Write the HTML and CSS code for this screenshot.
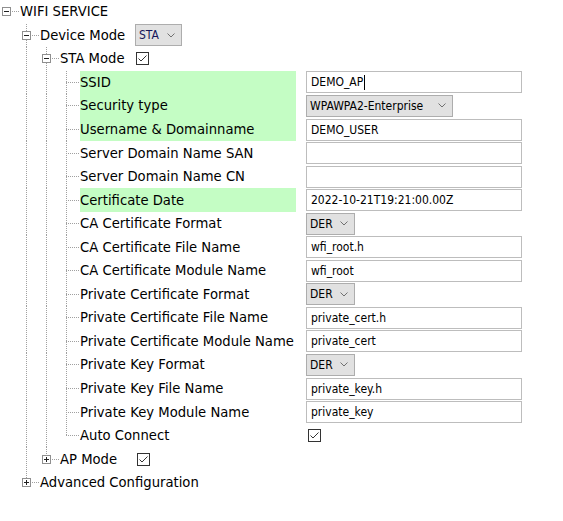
FILE: index.html
```html
<!DOCTYPE html>
<html>
<head>
<meta charset="utf-8">
<link rel="stylesheet" href="styles.css">
</head>
<body>
<div class="tree">
  <div class="row">
    <span class="node n-root"><svg class="exp" width="9" height="9" viewBox="0 0 9 9"><rect x="0.5" y="0.5" width="8" height="8" fill="#fff" stroke="#8f8f8f"/><path d="M2 4.5h5" stroke="#202020"/></svg></span>
    <span class="label">WIFI SERVICE</span>
  </div>
  <div class="row">
    <span class="spacer"></span>
    <span class="node n-mid"><svg class="exp" width="9" height="9" viewBox="0 0 9 9"><rect x="0.5" y="0.5" width="8" height="8" fill="#fff" stroke="#8f8f8f"/><path d="M2 4.5h5" stroke="#202020"/></svg></span>
    <span class="label w-l1">Device Mode</span>
    <span class="select sel-sta"><span class="sel-text navy">STA</span><svg class="chev" width="8" height="5" viewBox="0 0 8 5"><path d="M0.5 0.5L4 4L7.5 0.5" fill="none" stroke="#707070"/></svg></span>
  </div>
  <div class="row">
    <span class="spacer"></span><span class="guide"></span>
    <span class="node n-mid"><svg class="exp" width="9" height="9" viewBox="0 0 9 9"><rect x="0.5" y="0.5" width="8" height="8" fill="#fff" stroke="#8f8f8f"/><path d="M2 4.5h5" stroke="#202020"/></svg></span>
    <span class="label w-l2">STA Mode</span>
    <svg class="check" width="13" height="13" viewBox="0 0 13 13"><rect x="0.5" y="0.5" width="12" height="12" fill="#fff" stroke="#333"/><path d="M2.5 6.5L5 9L10.5 3.5" fill="none" stroke="#333"/></svg>
  </div>
  <div class="row">
    <span class="spacer"></span><span class="guide"></span><span class="guide"></span>
    <span class="node n-mid"></span>
    <span class="label w-l3 hl">SSID</span>
    <span class="field"><span class="input">DEMO_AP<span class="caret"></span></span></span>
  </div>
  <div class="row">
    <span class="spacer"></span><span class="guide"></span><span class="guide"></span>
    <span class="node n-mid"></span>
    <span class="label w-l3 hl">Security type</span>
    <span class="field"><span class="select sel-wpa"><span class="sel-text">WPAWPA2-Enterprise</span><svg class="chev" width="8" height="5" viewBox="0 0 8 5"><path d="M0.5 0.5L4 4L7.5 0.5" fill="none" stroke="#707070"/></svg></span></span>
  </div>
  <div class="row">
    <span class="spacer"></span><span class="guide"></span><span class="guide"></span>
    <span class="node n-mid"></span>
    <span class="label w-l3 hl">Username &amp; Domainname</span>
    <span class="field"><span class="input">DEMO_USER</span></span>
  </div>
  <div class="row">
    <span class="spacer"></span><span class="guide"></span><span class="guide"></span>
    <span class="node n-mid"></span>
    <span class="label w-l3">Server Domain Name SAN</span>
    <span class="field"><span class="input"></span></span>
  </div>
  <div class="row">
    <span class="spacer"></span><span class="guide"></span><span class="guide"></span>
    <span class="node n-mid"></span>
    <span class="label w-l3">Server Domain Name CN</span>
    <span class="field"><span class="input"></span></span>
  </div>
  <div class="row">
    <span class="spacer"></span><span class="guide"></span><span class="guide"></span>
    <span class="node n-mid"></span>
    <span class="label w-l3 hl">Certificate Date</span>
    <span class="field"><span class="input">2022-10-21T19:21:00.00Z</span></span>
  </div>
  <div class="row">
    <span class="spacer"></span><span class="guide"></span><span class="guide"></span>
    <span class="node n-mid"></span>
    <span class="label w-l3">CA Certificate Format</span>
    <span class="field"><span class="select sel-der"><span class="sel-text">DER</span><svg class="chev" width="8" height="5" viewBox="0 0 8 5"><path d="M0.5 0.5L4 4L7.5 0.5" fill="none" stroke="#707070"/></svg></span></span>
  </div>
  <div class="row">
    <span class="spacer"></span><span class="guide"></span><span class="guide"></span>
    <span class="node n-mid"></span>
    <span class="label w-l3">CA Certificate File Name</span>
    <span class="field"><span class="input">wfi_root.h</span></span>
  </div>
  <div class="row">
    <span class="spacer"></span><span class="guide"></span><span class="guide"></span>
    <span class="node n-mid"></span>
    <span class="label w-l3">CA Certificate Module Name</span>
    <span class="field"><span class="input">wfi_root</span></span>
  </div>
  <div class="row">
    <span class="spacer"></span><span class="guide"></span><span class="guide"></span>
    <span class="node n-mid"></span>
    <span class="label w-l3">Private Certificate Format</span>
    <span class="field"><span class="select sel-der"><span class="sel-text">DER</span><svg class="chev" width="8" height="5" viewBox="0 0 8 5"><path d="M0.5 0.5L4 4L7.5 0.5" fill="none" stroke="#707070"/></svg></span></span>
  </div>
  <div class="row">
    <span class="spacer"></span><span class="guide"></span><span class="guide"></span>
    <span class="node n-mid"></span>
    <span class="label w-l3">Private Certificate File Name</span>
    <span class="field"><span class="input">private_cert.h</span></span>
  </div>
  <div class="row">
    <span class="spacer"></span><span class="guide"></span><span class="guide"></span>
    <span class="node n-mid"></span>
    <span class="label w-l3">Private Certificate Module Name</span>
    <span class="field"><span class="input">private_cert</span></span>
  </div>
  <div class="row">
    <span class="spacer"></span><span class="guide"></span><span class="guide"></span>
    <span class="node n-mid"></span>
    <span class="label w-l3">Private Key Format</span>
    <span class="field"><span class="select sel-der"><span class="sel-text">DER</span><svg class="chev" width="8" height="5" viewBox="0 0 8 5"><path d="M0.5 0.5L4 4L7.5 0.5" fill="none" stroke="#707070"/></svg></span></span>
  </div>
  <div class="row">
    <span class="spacer"></span><span class="guide"></span><span class="guide"></span>
    <span class="node n-mid"></span>
    <span class="label w-l3">Private Key File Name</span>
    <span class="field"><span class="input">private_key.h</span></span>
  </div>
  <div class="row">
    <span class="spacer"></span><span class="guide"></span><span class="guide"></span>
    <span class="node n-mid"></span>
    <span class="label w-l3">Private Key Module Name</span>
    <span class="field"><span class="input">private_key</span></span>
  </div>
  <div class="row">
    <span class="spacer"></span><span class="guide"></span><span class="guide"></span>
    <span class="node n-last"></span>
    <span class="label w-l3">Auto Connect</span>
    <span class="field"><svg class="check check-field" width="13" height="13" viewBox="0 0 13 13"><rect x="0.5" y="0.5" width="12" height="12" fill="#fff" stroke="#333"/><path d="M2.5 6.5L5 9L10.5 3.5" fill="none" stroke="#333"/></svg></span>
  </div>
  <div class="row">
    <span class="spacer"></span><span class="guide"></span>
    <span class="node n-last"><svg class="exp" width="9" height="9" viewBox="0 0 9 9"><rect x="0.5" y="0.5" width="8" height="8" fill="#fff" stroke="#8f8f8f"/><path d="M2 4.5h5M4.5 2v5" stroke="#202020"/></svg></span>
    <span class="label w-l2b">AP Mode</span>
    <svg class="check" width="13" height="13" viewBox="0 0 13 13"><rect x="0.5" y="0.5" width="12" height="12" fill="#fff" stroke="#333"/><path d="M2.5 6.5L5 9L10.5 3.5" fill="none" stroke="#333"/></svg>
  </div>
  <div class="row">
    <span class="spacer"></span>
    <span class="node n-last"><svg class="exp" width="9" height="9" viewBox="0 0 9 9"><rect x="0.5" y="0.5" width="8" height="8" fill="#fff" stroke="#8f8f8f"/><path d="M2 4.5h5M4.5 2v5" stroke="#202020"/></svg></span>
    <span class="label">Advanced Configuration</span>
  </div>
</div>
</body>
</html>
```
FILE: styles.css
```css
* { box-sizing: border-box; }
body {
  margin: 0;
  background: #fff;
  color: #000;
  font-family: "DejaVu Sans", Verdana, sans-serif;
  font-size: 13.2px;
}
.tree {
  --hdots: repeating-linear-gradient(to right, #a0a0a0 0 1px, transparent 1px 2px);
  --vdots: repeating-linear-gradient(to bottom, #a0a0a0 0 1px, transparent 1px 2px);
  display: flex;
  flex-direction: column;
}
.row {
  display: flex;
  align-items: center;
  height: 23.55px;
}
.spacer, .guide, .node {
  flex: none;
  width: 20px;
  align-self: stretch;
}
.guide {
  background: var(--vdots) 6px 0 / 1px 100% no-repeat;
}
.node {
  display: flex;
  align-items: center;
  background-repeat: no-repeat;
}
.n-root {
  background-image: var(--hdots);
  background-size: 13px 1px;
  background-position: 6px 50%;
}
.n-mid {
  background-image: var(--hdots), var(--vdots);
  background-size: 14px 1px, 1px 100%;
  background-position: 6px 50%, 6px 0;
}
.n-last {
  background-image: var(--hdots), var(--vdots);
  background-size: 14px 1px, 1px 50%;
  background-position: 6px 50%, 6px 0;
}
.exp {
  display: block;
  margin-left: 2px;
}
.label {
  flex: none;
  align-self: stretch;
  display: flex;
  align-items: center;
  white-space: nowrap;
}
.w-l1 { width: 95px; }
.w-l2 { width: 76px; }
.w-l2b { width: 77px; }
.w-l3 { width: 216px; }
.hl { background: #c4fdc4; }
.field {
  flex: none;
  width: 216px;
  margin-left: 10px;
  display: flex;
  align-items: center;
}
.input, .sel-text {
  font-family: "DejaVu Sans Condensed", Tahoma, sans-serif;
  font-size: 12px;
}
.input {
  width: 216px;
  height: 22px;
  border: 1px solid #bdbdbd;
  background: #fff;
  padding: 0 4px;
  display: flex;
  align-items: center;
  white-space: nowrap;
}
.caret {
  display: inline-block;
  width: 1px;
  height: 15px;
  margin-left: 1px;
  background: #000;
}
.select {
  flex: none;
  height: 22px;
  border: 1px solid #adadad;
  background: #e1e1e1;
  display: flex;
  align-items: center;
  padding: 0 6px 0 3px;
}
.chev { display: block; margin-left: auto; }
.sel-sta { width: 47px; }
.sel-wpa { width: 147px; }
.sel-der { width: 49px; }
.navy { color: #14145a; }
.check { display: block; flex: none; }
.check-field { margin-left: 2px; }
```
